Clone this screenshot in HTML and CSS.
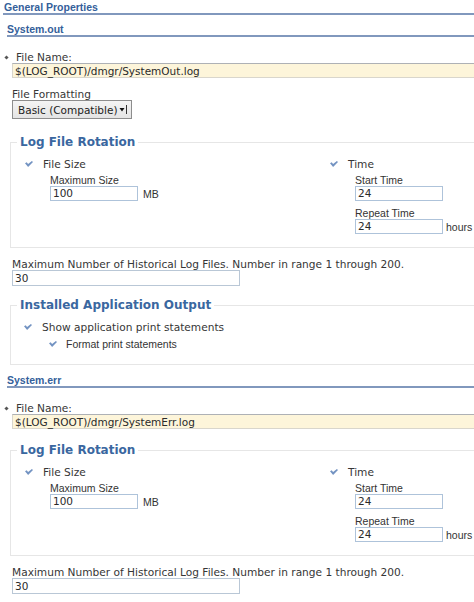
FILE: index.html
```html
<!DOCTYPE html>
<html lang="en">
<head>
<meta charset="utf-8">
<title>General Properties</title>
<link rel="stylesheet" href="styles.css">
</head>
<body>
<div class="page">
  <div class="gp-title">General Properties</div>

  <section class="stream">
    <div class="stream-title">System.out</div>
    <div class="field name-field">
      <div class="label req"><span class="req-mark"></span>File Name:</div>
      <div class="text name">$(LOG_ROOT)/dmgr/SystemOut.log</div>
    </div>
    <div class="field fmt-field">
      <div class="label">File Formatting</div>
      <div class="select"><span class="select-text">Basic (Compatible)</span><svg class="select-arrow" width="9" height="11" viewBox="0 0 9 11"><path d="M0.5 4 L5.5 4 L3 7.5 Z" fill="#111"/><path d="M7.5 1 L7.5 10" stroke="#333" stroke-width="1"/></svg></div>
    </div>
    <fieldset class="group rotation first">
      <legend>Log File Rotation</legend>
      <div class="rot-grid">
        <div class="rot-col">
          <div class="check-row"><svg class="check" width="8" height="6" viewBox="0 0 8 6"><path d="M0 2.2 L1.7 1.3 L3.1 3.1 L6.9 0 L8 0.9 L3.1 6 Z" fill="#7393c2"/></svg><span>File Size</span></div>
          <div class="sub">
            <div class="sublabel">Maximum Size</div>
            <div class="input-line"><div class="text small">100</div><span class="unit">MB</span></div>
          </div>
        </div>
        <div class="rot-col">
          <div class="check-row"><svg class="check" width="8" height="6" viewBox="0 0 8 6"><path d="M0 2.2 L1.7 1.3 L3.1 3.1 L6.9 0 L8 0.9 L3.1 6 Z" fill="#7393c2"/></svg><span>Time</span></div>
          <div class="sub">
            <div class="sublabel">Start Time</div>
            <div class="input-line"><div class="text small">24</div></div>
            <div class="sublabel next">Repeat Time</div>
            <div class="input-line"><div class="text small">24</div><span class="unit tight">hours</span></div>
          </div>
        </div>
      </div>
    </fieldset>
    <div class="field hist-field">
      <div class="label">Maximum Number of Historical Log Files. Number in range 1 through 200.</div>
      <div class="text hist">30</div>
    </div>
    <fieldset class="group output">
      <legend>Installed Application Output</legend>
      <div class="out-list">
        <div class="check-row"><svg class="check" width="8" height="6" viewBox="0 0 8 6"><path d="M0 2.2 L1.7 1.3 L3.1 3.1 L6.9 0 L8 0.9 L3.1 6 Z" fill="#7393c2"/></svg><span>Show application print statements</span></div>
        <div class="check-row sans nested"><svg class="check" width="8" height="6" viewBox="0 0 8 6"><path d="M0 2.2 L1.7 1.3 L3.1 3.1 L6.9 0 L8 0.9 L3.1 6 Z" fill="#7393c2"/></svg><span>Format print statements</span></div>
      </div>
    </fieldset>
  </section>

  <section class="stream err">
    <div class="stream-title">System.err</div>
    <div class="field name-field">
      <div class="label req"><span class="req-mark"></span>File Name:</div>
      <div class="text name">$(LOG_ROOT)/dmgr/SystemErr.log</div>
    </div>
    <fieldset class="group rotation">
      <legend>Log File Rotation</legend>
      <div class="rot-grid">
        <div class="rot-col">
          <div class="check-row"><svg class="check" width="8" height="6" viewBox="0 0 8 6"><path d="M0 2.2 L1.7 1.3 L3.1 3.1 L6.9 0 L8 0.9 L3.1 6 Z" fill="#7393c2"/></svg><span>File Size</span></div>
          <div class="sub">
            <div class="sublabel">Maximum Size</div>
            <div class="input-line"><div class="text small">100</div><span class="unit">MB</span></div>
          </div>
        </div>
        <div class="rot-col">
          <div class="check-row"><svg class="check" width="8" height="6" viewBox="0 0 8 6"><path d="M0 2.2 L1.7 1.3 L3.1 3.1 L6.9 0 L8 0.9 L3.1 6 Z" fill="#7393c2"/></svg><span>Time</span></div>
          <div class="sub">
            <div class="sublabel">Start Time</div>
            <div class="input-line"><div class="text small">24</div></div>
            <div class="sublabel next">Repeat Time</div>
            <div class="input-line"><div class="text small">24</div><span class="unit tight">hours</span></div>
          </div>
        </div>
      </div>
    </fieldset>
    <div class="field hist-field">
      <div class="label">Maximum Number of Historical Log Files. Number in range 1 through 200.</div>
      <div class="text hist">30</div>
    </div>
  </section>
</div>
</body>
</html>
```

FILE: styles.css
```css
html, body {
  margin: 0;
  padding: 0;
  background: #ffffff;
  overflow: hidden;
}

.page {
  width: 560px;
  font-family: "DejaVu Sans", sans-serif;
  font-size: 10.6px;
  color: #363636;
}

.gp-title {
  font-family: "Liberation Sans", Arial, sans-serif;
  font-weight: bold;
  font-size: 10.5px;
  line-height: 12px;
  height: 12px;
  color: #34609a;
  margin-left: 3px;
  padding: 1px 0 0 1px;
  border-bottom: 2px solid #8198bd;
}

.stream-title {
  font-family: "Liberation Sans", Arial, sans-serif;
  font-weight: bold;
  font-size: 10.5px;
  line-height: 12px;
  height: 12px;
  color: #34609a;
  margin: 8px 0 0 7px;
  border-bottom: 2px solid #8198bd;
}

.stream.err .stream-title {
  margin-top: 9px;
}

.field {
  margin-left: 12px;
}

.label {
  line-height: 12px;
  height: 12px;
  white-space: nowrap;
}

.name-field {
  margin-top: 14px;
}

.fmt-field {
  margin-top: 10px;
}

.hist-field {
  margin-top: 10px;
}

.label.req {
  margin-left: -7px;
}

.req-mark {
  display: inline-block;
  width: 3px;
  height: 3px;
  background: #555;
  transform: rotate(45deg);
  margin-right: 8px;
  vertical-align: 2px;
}

.text {
  box-sizing: border-box;
  padding: 0 2px;
  font-family: "DejaVu Sans", sans-serif;
  font-size: 10.5px;
  line-height: 14px;
  color: #2a2a2a;
  white-space: nowrap;
  overflow: visible;
}

.text.name {
  width: 540px;
  height: 15px;
  background: #fdf5da;
  border: 1px solid #d9d6cc;
  border-top-color: #aeb1b5;
}

.text.small {
  flex: none;
  width: 88px;
  height: 15px;
  line-height: 13px;
  background: #ffffff;
  border: 1px solid #aec3da;
}

.text.hist {
  width: 228px;
  height: 16px;
  background: #ffffff;
  border: 1px solid #b9c7d6;
}

.select {
  display: flex;
  align-items: center;
  box-sizing: border-box;
  width: 120px;
  height: 19px;
  padding: 0 3px 0 5px;
  border: 1px solid #8d8d8d;
  background: linear-gradient(#f4f4f4, #e4e4e4);
  color: #222;
  font-size: 10.5px;
  white-space: nowrap;
}

.select-text {
  flex: 1;
}

.select-arrow {
  display: block;
}

.group {
  margin: 0 0 0 10px;
  padding: 9px 0 13px 6px;
  border: 1px solid #e6e6e6;
  min-width: 0;
}

.group.rotation {
  margin-top: 14px;
}

.group.rotation.first {
  margin-top: 16px;
}

.group.output {
  margin-top: 12px;
  padding-bottom: 14px;
}

.group legend {
  padding: 0 3px;
  font-family: "DejaVu Sans", sans-serif;
  font-weight: bold;
  font-size: 12px;
  line-height: 14px;
  color: #3a67a0;
}

.rot-grid {
  display: grid;
  grid-template-columns: 305px 1fr;
  margin-left: 8px;
  align-items: start;
}

.check-row {
  display: flex;
  align-items: center;
  line-height: 12px;
  height: 12px;
  white-space: nowrap;
}

.check {
  display: block;
  flex: none;
  margin-right: 10px;
  margin-top: -1px;
}

.sub {
  padding-left: 25px;
  margin-top: 4px;
}

.sublabel {
  font-family: "Liberation Sans", Arial, sans-serif;
  font-size: 10.5px;
  line-height: 12px;
  height: 12px;
  color: #333;
  white-space: nowrap;
}

.sublabel.next {
  margin-top: 6px;
}

.input-line {
  display: flex;
  align-items: center;
}

.unit {
  font-family: "Liberation Sans", Arial, sans-serif;
  font-size: 10.5px;
  color: #333;
  margin-left: 5px;
}

.unit.tight {
  margin-left: 3px;
}

.out-list {
  margin-left: 7px;
}

.check-row.sans {
  font-family: "Liberation Sans", Arial, sans-serif;
  font-size: 10.5px;
  color: #333;
}

.check-row.nested {
  margin-top: 5px;
  margin-left: 25px;
}

.check-row.nested .check {
  margin-right: 9px;
}
```
